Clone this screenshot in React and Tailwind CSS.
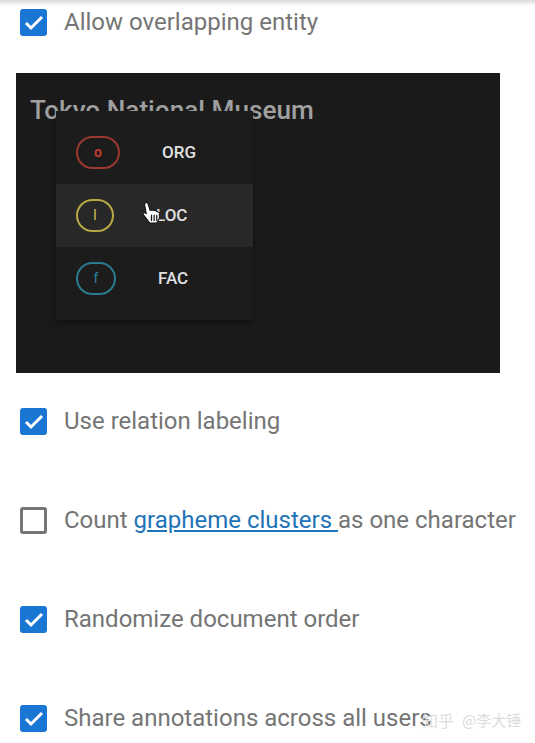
const Checkbox = ({ checked }) =>
    checked ? (
        <span className="flex h-[27px] w-[27px] shrink-0 items-center justify-center rounded-[3px] bg-[#1976d2]">
            <svg viewBox="0 0 27 27" className="h-[27px] w-[27px]">
                <path d="M6 14 L11 19 L22 8" fill="none" stroke="#fff" strokeWidth="3" />
            </svg>
        </span>
    ) : (
        <span className="h-[27px] w-[27px] shrink-0 rounded-[3px] border-[3px] border-[#757575]"></span>
    );

const Row = ({ checked, children, className }) => (
    <div className={`flex h-[28px] items-center gap-[17px] pl-[20px] ${className}`}>
        <Checkbox checked={checked} />
        <span className="whitespace-nowrap text-[24px] leading-[28px] text-[#757575]">{children}</span>
    </div>
);

const MenuItem = ({ letter, label, chipClass, letterClass, active }) => (
    <div className={`flex h-[63px] items-center gap-[42px] pl-[20px] ${active ? "bg-[#282828]" : ""}`}>
        <span className={`flex h-[33px] items-center justify-center rounded-full border-2 text-[14px] ${chipClass} ${letterClass}`}>
            {letter}
        </span>
        <span className="text-[17px] font-medium text-[#e0e0e0]">{label}</span>
    </div>
);

const App = () => {
    return (
        <div className="relative h-[743px] w-[535px] overflow-hidden bg-white pt-[8px] font-['Roboto',sans-serif]">
            <div className="absolute left-0 right-0 top-0 h-[6px] bg-gradient-to-b from-[#d9d9d9] to-white"></div>

            <Row checked>Allow overlapping entity</Row>

            <div className="relative ml-[16px] mt-[37px] h-[300px] w-[484px] bg-[#1a1a1a] pl-[14px] pt-[20px]">
                <div className="whitespace-nowrap text-[26.2px] font-medium leading-[34px] text-[#a0a0a0]">Tokyo National Museum</div>

                <div className="absolute left-[40px] top-[38px] h-[209px] w-[197px] bg-[#1c1c1c] pt-[10px] shadow-[0_3px_6px_rgba(0,0,0,0.35)]">
                    <MenuItem letter="o" label="ORG" chipClass="w-[44px] border-[#9c3830]" letterClass="font-bold text-[#c0392f]" />
                    <MenuItem letter="l" label="LOC" chipClass="w-[38px] border-[#b8a845]" letterClass="text-[#d8c654]" active />
                    <MenuItem letter="f" label="FAC" chipClass="w-[40px] border-[#2a7a90]" letterClass="text-[#2a86a0]" />
                </div>

                <svg viewBox="0 0 24 26" className="absolute left-[125px] top-[128px] h-[24px] w-[21px]">
                    <path
                        d="M5 1.5 C6 0.5 7.5 1 8 2.5 L10.5 10 L13 9.5 L15 10 L17 10.5 L19 11.5 L21 13 L21 19 L18 24.5 L10 24.5 L2 14 L3 12.5 L6 13.5 L4 3 Z"
                        fill="#fff"
                        stroke="#111"
                        strokeWidth="1.2"
                    />
                    <path d="M12 15 V22 M15 15 V22 M18 15 V22" stroke="#111" strokeWidth="1.4" />
                </svg>
            </div>

            <Row checked className="mt-[34px]">Use relation labeling</Row>
            <Row className="mt-[71px]">
                Count{" "}
                <a href="#" className="text-[#1f73b7] underline">
                    grapheme clusters{" "}
                </a>
                as one character
            </Row>
            <Row checked className="mt-[71px]">Randomize document order</Row>
            <Row checked className="mt-[71px]">Share annotations across all users</Row>

            <div className="absolute left-[422px] top-[709px] flex items-center gap-[8px] whitespace-nowrap font-['Noto_Sans_CJK_SC',sans-serif] text-[16px] leading-[22px] text-[#dcdcdc]">
                <span>知乎</span>
                <span className="text-[15px]">@李大锤</span>
            </div>
        </div>
    );
};

export default App;
